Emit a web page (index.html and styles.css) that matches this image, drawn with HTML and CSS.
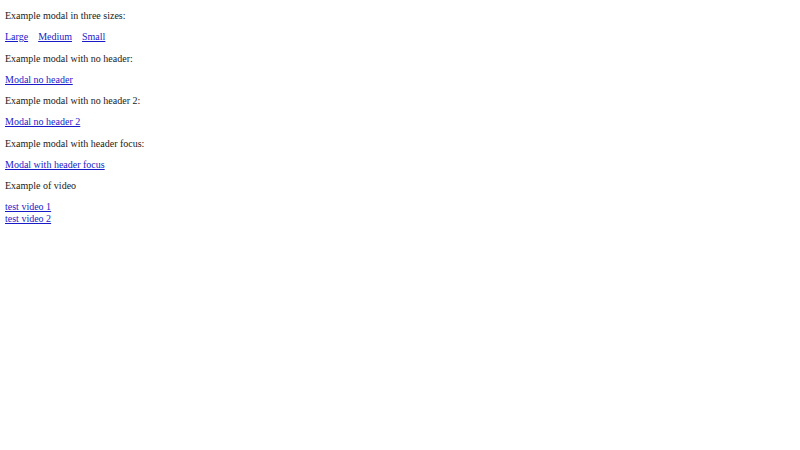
FILE: index.html
```html
<!DOCTYPE html>
<html>
<head>
<meta charset="utf-8">
<title>Modal examples</title>
<link rel="stylesheet" href="styles.css">
</head>
<body class="page">
<p class="label first">Example modal in three sizes:</p>
<p class="links"><a href="#" class="link">Large</a><a href="#" class="link">Medium</a><a href="#" class="link">Small</a></p>
<p class="label">Example modal with no header:</p>
<p class="links"><a href="#" class="link">Modal no header</a></p>
<p class="label">Example modal with no header 2:</p>
<p class="links"><a href="#" class="link">Modal no header 2</a></p>
<p class="label">Example modal with header focus:</p>
<p class="links"><a href="#" class="link">Modal with header focus</a></p>
<p class="label">Example of video</p>
<div class="videos">
<a href="#" class="link">test video 1</a><br>
<a href="#" class="link">test video 2</a>
</div>
</body>
</html>
```
FILE: styles.css
```css
html { background: #fff; }
.page {
  margin: 0;
  padding: 5px;
  font-family: "Liberation Serif", "Times New Roman", serif;
  font-size: 10px;
  line-height: 11.25px;
  color: #1a1a1a;
}
.label, .links { margin: 10px 0; }
.first { margin-top: 5px; }
.link { color: #1a1ac8; margin-right: 10px; }
.link:last-child { margin-right: 0; }
.videos .link { margin-right: 0; }
```
